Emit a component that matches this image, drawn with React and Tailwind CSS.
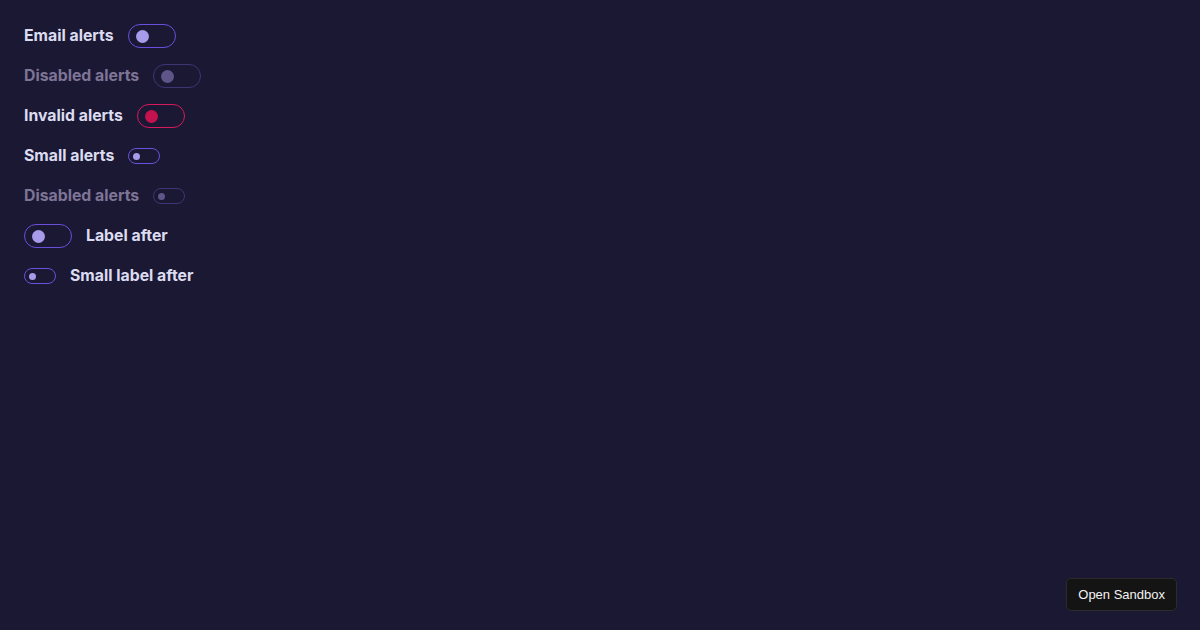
function Switch({ size = "md", variant = "default" }) {
  const md = size === "md"
  const border =
    variant === "invalid"
      ? "border-[#d8195e]"
      : variant === "disabled"
        ? "border-[#3f3476]"
        : "border-[#6a4fdc]"
  const thumb =
    variant === "invalid"
      ? "bg-[#c3124f]"
      : variant === "disabled"
        ? "bg-[#5f5589]"
        : "bg-[#a79bea]"
  return (
    <span
      className={`inline-flex shrink-0 items-center rounded-full border ${border} ${
        md ? "h-6 w-12 pl-[7px]" : "h-4 w-8 pl-[4px]"
      }`}
    >
      <span className={`rounded-full ${thumb} ${md ? "h-[13px] w-[13px]" : "h-[7px] w-[7px]"}`} />
    </span>
  )
}

function Row({ label, size, variant, after }) {
  const text = variant === "disabled" ? "text-[#7e7596]" : "text-[#dcdcf0]"
  const lbl = <span className={`text-[15.8px] font-bold leading-5 ${text}`}>{label}</span>
  return (
    <div className="flex h-10 items-center gap-[14px]">
      {after ? (
        <>
          <Switch size={size} variant={variant} />
          {lbl}
        </>
      ) : (
        <>
          {lbl}
          <Switch size={size} variant={variant} />
        </>
      )}
    </div>
  )
}

export default function App() {
  return (
    <div
      className="relative flex h-[630px] w-[1200px] flex-col bg-[#1b1834] px-6 pt-4"
      style={{ fontFamily: "Inter, 'Liberation Sans', sans-serif" }}
    >
      <Row label="Email alerts" />
      <Row label="Disabled alerts" variant="disabled" />
      <Row label="Invalid alerts" variant="invalid" />
      <Row label="Small alerts" size="sm" />
      <Row label="Disabled alerts" size="sm" variant="disabled" />
      <Row label="Label after" after />
      <Row label="Small label after" size="sm" after />

      <button className="absolute bottom-[19px] right-[23px] rounded-[5px] border border-[#2b2b2b] bg-[#141414] px-[11px] py-[7px] font-['Liberation_Sans',sans-serif] text-[13px] leading-[17px] text-[#f2f2f2]">
        Open Sandbox
      </button>
    </div>
  )
}
